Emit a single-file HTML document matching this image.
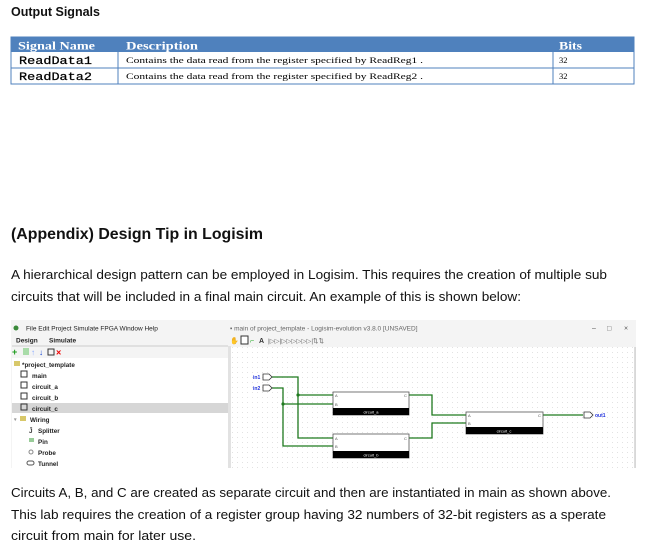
<!DOCTYPE html>
<html><head><meta charset="utf-8"><style>
html,body{margin:0;padding:0;background:#fff;width:656px;height:557px;overflow:hidden}
svg{display:block}
</style></head><body>
<svg width="656" height="557" viewBox="0 0 656 557" xmlns="http://www.w3.org/2000/svg" font-family="Liberation Sans, sans-serif">
<defs>
<pattern id="grid" width="5" height="5" patternUnits="userSpaceOnUse"><rect x="2" y="2" width="1" height="1" fill="#e2e2e2"/></pattern>
</defs>
<text x="11" y="16" font-size="12.5" font-weight="bold" fill="#111" textLength="89" lengthAdjust="spacingAndGlyphs">Output Signals</text>
<rect x="11" y="37" width="623" height="15" fill="#4f81bd"/>
<rect x="11" y="37" width="623" height="47" fill="none" stroke="#4f81bd" stroke-width="1"/>
<line x1="11" y1="68" x2="634" y2="68" stroke="#4f81bd"/>
<line x1="118" y1="52" x2="118" y2="84" stroke="#4f81bd"/>
<line x1="553" y1="52" x2="553" y2="84" stroke="#4f81bd"/>
<g font-family="Liberation Serif, serif" font-weight="bold" font-size="12" fill="#fff">
<text x="18" y="49.5" textLength="77" lengthAdjust="spacingAndGlyphs">Signal Name</text>
<text x="126" y="49.5" textLength="72" lengthAdjust="spacingAndGlyphs">Description</text>
<text x="559" y="49.5" textLength="23" lengthAdjust="spacingAndGlyphs">Bits</text>
</g>
<g font-family="Liberation Mono, monospace" font-size="11" fill="#000" stroke="#000" stroke-width="0.25">
<text x="19" y="64" textLength="73" lengthAdjust="spacingAndGlyphs">ReadData1</text>
<text x="19" y="80" textLength="73" lengthAdjust="spacingAndGlyphs">ReadData2</text>
</g>
<g font-family="Liberation Serif, serif" font-size="8.5" fill="#000">
<text x="126" y="63" textLength="297" lengthAdjust="spacingAndGlyphs">Contains the data read from the register specified by ReadReg1 .</text>
<text x="126" y="79" textLength="297" lengthAdjust="spacingAndGlyphs">Contains the data read from the register specified by ReadReg2 .</text>
<text x="559" y="63">32</text>
<text x="559" y="79">32</text>
</g>
<text x="11" y="239" font-size="16" font-weight="bold" fill="#111" textLength="252" lengthAdjust="spacingAndGlyphs">(Appendix) Design Tip in Logisim</text>
<g font-size="12.5" fill="#111">
<text x="11" y="279" textLength="596" lengthAdjust="spacingAndGlyphs">A hierarchical design pattern can be employed in Logisim. This requires the creation of multiple sub</text>
<text x="11" y="301" textLength="510" lengthAdjust="spacingAndGlyphs">circuits that will be included in a final main circuit. An example of this is shown below:</text>
<text x="11" y="497" textLength="600" lengthAdjust="spacingAndGlyphs">Circuits A, B, and C are created as separate circuit and then are instantiated in main as shown above.</text>
<text x="11" y="519" textLength="595" lengthAdjust="spacingAndGlyphs">This lab requires the creation of a register group having 32 numbers of 32-bit registers as a sperate</text>
<text x="11" y="540" textLength="185" lengthAdjust="spacingAndGlyphs">circuit from main for later use.</text>
</g>
<rect x="11" y="320" width="625" height="148" fill="#f4f4f4"/>
<circle cx="16" cy="328" r="2.5" fill="#3a8a3a"/>
<g font-size="6.5" fill="#222">
<text x="26" y="330.5">File  Edit  Project  Simulate  FPGA  Window  Help</text>
<text x="16" y="342.5" font-weight="bold">Design</text>
<text x="49" y="342.5" font-weight="bold">Simulate</text>
</g>
<text x="230" y="330.5" font-size="6.5" fill="#666">▪ main of project_template - Logisim-evolution v3.8.0 [UNSAVED]</text>
<g font-size="7" fill="#555"><text x="592" y="330.5">–</text><text x="607" y="330.5">□</text><text x="624" y="330.5">×</text></g>
<line x1="12" y1="346" x2="228" y2="346" stroke="#ccc"/>
<text x="12" y="355" font-size="9" font-weight="bold" fill="#1a9a1a">+</text>
<rect x="23" y="348" width="6" height="7" fill="#7c7" opacity=".6"/>
<text x="31" y="355" font-size="8" fill="#88aaff">↑</text>
<text x="39" y="355" font-size="8" fill="#1040d0">↓</text>
<rect x="48" y="349" width="6" height="6" fill="none" stroke="#333"/>
<text x="56" y="355.5" font-size="9" font-weight="bold" fill="#e00">×</text>
<rect x="12" y="358" width="216" height="110" fill="#fff"/>
<rect x="12" y="403" width="216" height="10" fill="#d6d6d6"/>
<rect x="228" y="346" width="3" height="122" fill="#e2e2e2"/>
<g font-size="6.3" font-weight="bold" fill="#222">
<rect x="14" y="361" width="6" height="5" fill="#d8c86a"/>
<text x="22" y="367">*project_template</text>
<rect x="21" y="371" width="6" height="6" fill="none" stroke="#333"/><text x="32" y="378">main</text>
<rect x="21" y="382" width="6" height="6" fill="none" stroke="#333"/><text x="32" y="389">circuit_a</text>
<rect x="21" y="393" width="6" height="6" fill="none" stroke="#333"/><text x="32" y="400">circuit_b</text>
<rect x="21" y="404" width="6" height="6" fill="none" stroke="#333"/><text x="32" y="411">circuit_c</text>
<text x="14" y="421" font-size="5" fill="#999">▾</text>
<rect x="20" y="416" width="6" height="5" fill="#d8c86a"/><text x="30" y="422">Wiring</text>
<text x="29" y="433" fill="#333">Ĵ</text><text x="38" y="433">Splitter</text>
<rect x="29" y="438" width="5" height="4" fill="#9c9"/><text x="38" y="444">Pin</text>
<circle cx="31" cy="452" r="2" fill="none" stroke="#888"/><text x="38" y="455">Probe</text>
<rect x="27" y="461" width="7" height="4" rx="2" fill="none" stroke="#555"/><text x="38" y="466">Tunnel</text>
</g>
<g font-size="7" fill="#333">
<text x="230" y="343" fill="#c86">✋</text>
<rect x="241" y="336" width="7" height="8" fill="#fff" stroke="#333"/>
<text x="250" y="343" fill="#2a2">⌐</text>
<text x="259" y="343" font-weight="bold">A</text>
<text x="268" y="343" fill="#666" font-size="6.5">|▷▷|▷▷▷▷▷▷|⇅⇅</text>
</g>
<rect x="231" y="347" width="404" height="121" fill="#fff"/>
<rect x="231" y="347" width="404" height="121" fill="url(#grid)"/>
<line x1="635" y1="347" x2="635" y2="468" stroke="#bbb"/>
<g stroke="#1f7a1f" stroke-width="1.3" fill="none">
<polyline points="272,377 298,377 298,438 333,438"/>
<polyline points="298,395 333,395"/>
<polyline points="272,388 283,388 283,446 333,446"/>
<polyline points="283,404 333,404"/>
<polyline points="409,395 432,395 432,415 466,415"/>
<polyline points="409,438 432,438 432,423 466,423"/>
<polyline points="543,415 583,415"/>
</g>
<circle cx="298" cy="395" r="1.6" fill="#1f7a1f"/>
<circle cx="283" cy="404" r="1.6" fill="#1f7a1f"/>
<g stroke="#333" stroke-width="0.8" fill="#fff">
<path d="M263,374 h6 l3,3 l-3,3 h-6z"/>
<path d="M263,385 h6 l3,3 l-3,3 h-6z"/>
<path d="M584,412 h6 l3,3 l-3,3 h-6z"/>
</g>
<g font-size="5" font-weight="bold" fill="#2233dd">
<text x="253" y="379">in1</text><text x="253" y="390">in2</text><text x="595" y="417">out1</text>
</g>
<g stroke="#555" stroke-width="0.8" fill="#fff">
<rect x="333" y="392" width="76" height="23"/>
<rect x="333" y="434" width="76" height="24"/>
<rect x="466" y="412" width="77" height="22"/>
</g>
<rect x="333" y="408" width="76" height="7" fill="#000"/>
<rect x="333" y="451" width="76" height="7" fill="#000"/>
<rect x="466" y="427" width="77" height="7" fill="#000"/>
<g font-size="4" fill="#fff" text-anchor="middle">
<text x="371" y="413.5">circuit_a</text><text x="371" y="456.5">circuit_b</text><text x="504" y="432.5">circuit_c</text>
</g>
<g font-size="4" fill="#555">
<text x="335" y="397">A</text><text x="335" y="406">B</text><text x="404" y="397">C</text>
<text x="335" y="440">A</text><text x="335" y="448">B</text><text x="404" y="440">C</text>
<text x="468" y="417">A</text><text x="468" y="425">B</text><text x="538" y="417">C</text>
</g>
</svg>
</body></html>
